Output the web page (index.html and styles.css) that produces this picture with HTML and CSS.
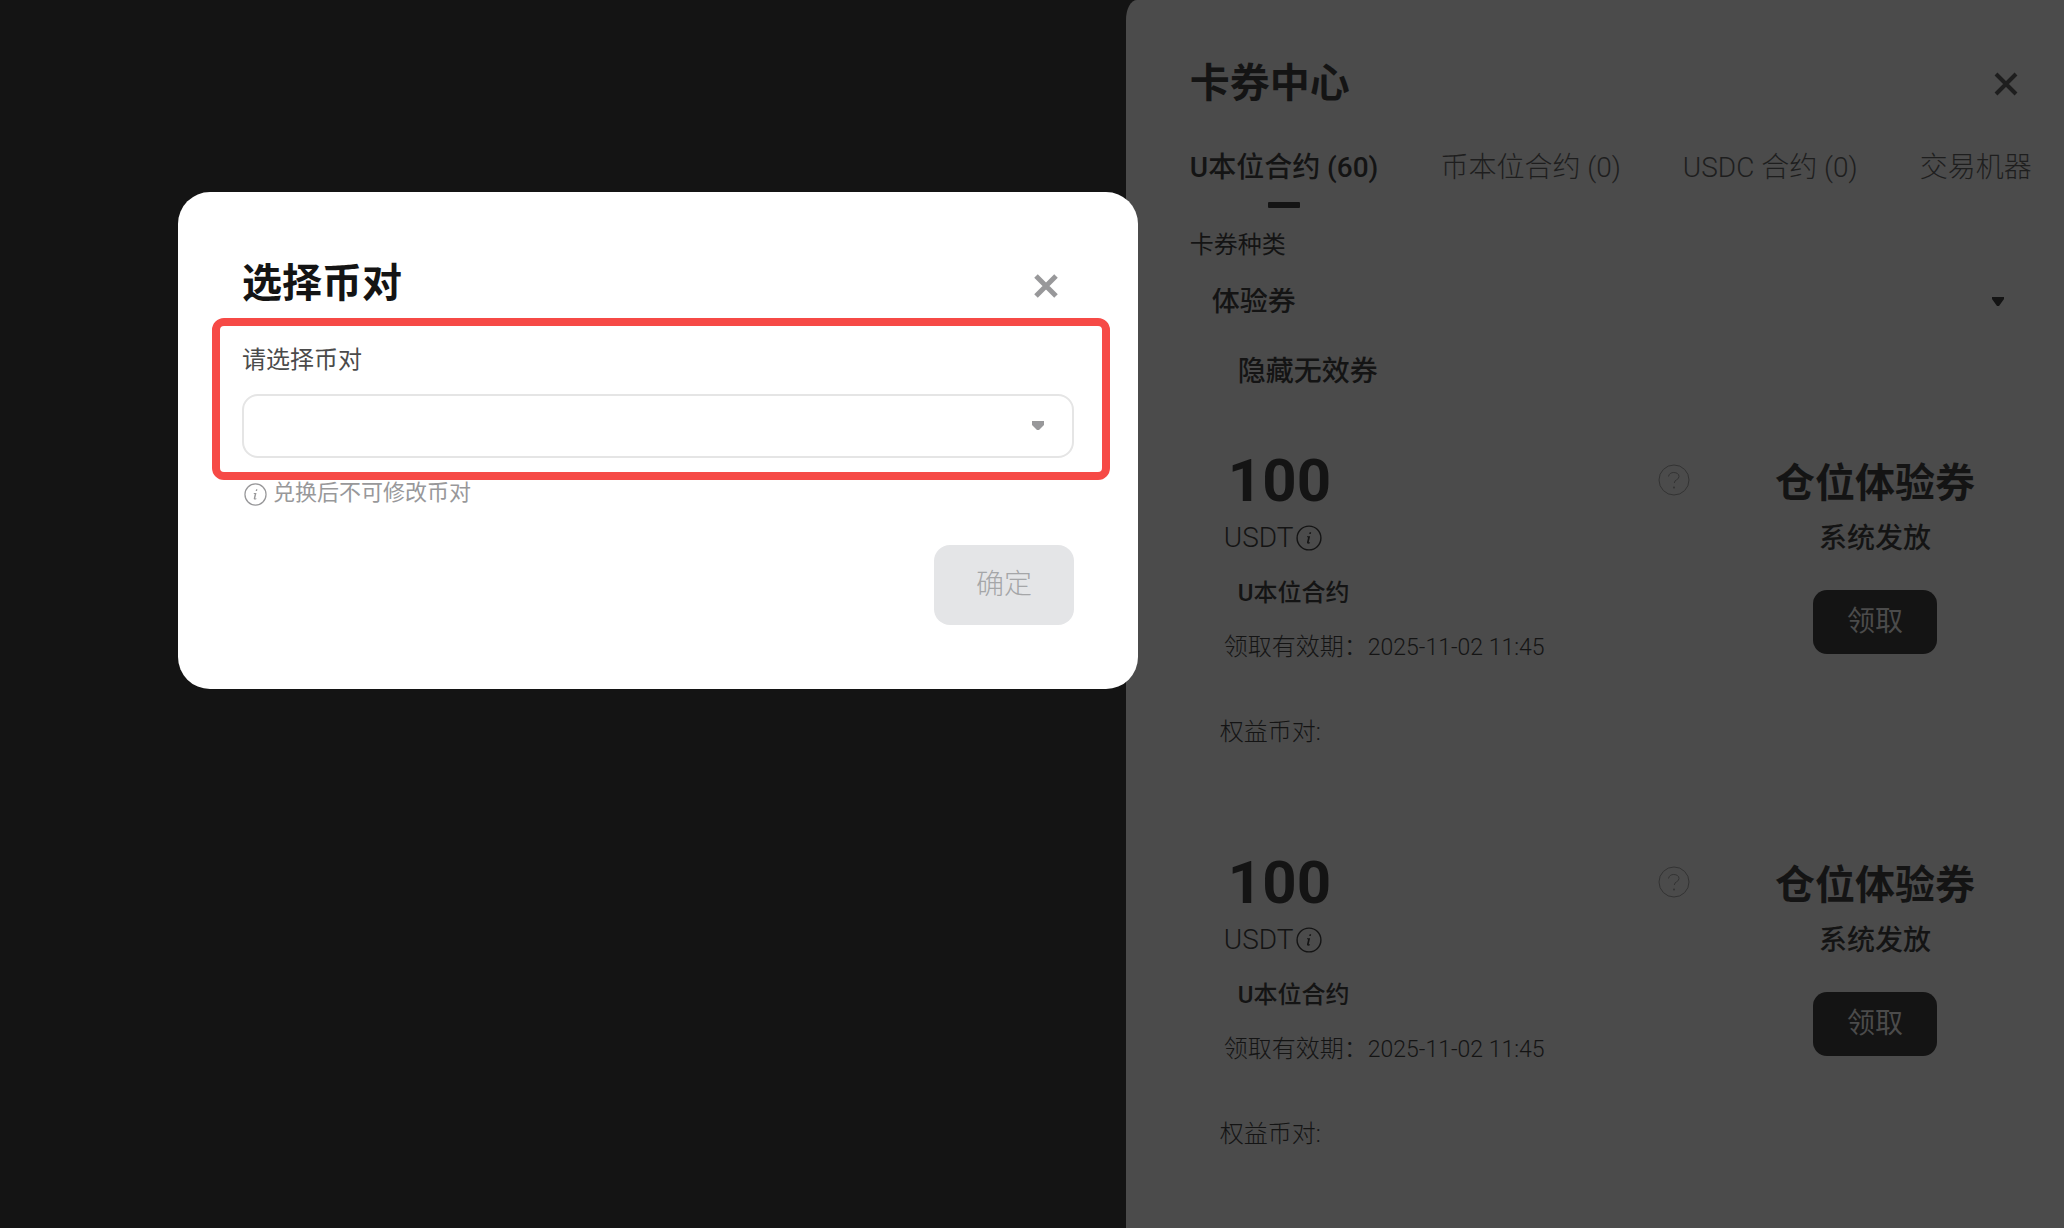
FILE: index.html
```html
<!DOCTYPE html>
<html lang="zh-CN">
<head>
<meta charset="UTF-8" />
<meta name="viewport" content="width=device-width, initial-scale=1" />
<title>卡券中心</title>
<link rel="stylesheet" href="styles.css">
</head>
<body>
  <!-- 图标 -->
  <svg class="sprite" aria-hidden="true">
    <symbol id="icon-info" viewBox="0 0 24 24">
      <circle cx="12" cy="12" r="11" fill="none" stroke="currentColor" stroke-width="1.3"/>
      <path d="M12.6 6.6h1.4l-.4 1.7h-1.4zM10.3 10.4h2.7l-1.2 5.2c-.1.5.2.7 1.2.4l-.2.9c-1.8.7-2.9.2-2.6-1.1l1-4.4h-1.1z" fill="currentColor"/>
    </symbol>
    <symbol id="icon-help" viewBox="0 0 32 32">
      <circle cx="16" cy="16" r="15" fill="none" stroke="currentColor"/>
      <path d="M10.500 12.500c.5-2.600 2.500-4 5.300-4 3 0 5.200 1.500 5.200 4 0 3.400-4.700 3-4.700 6.500" fill="none" stroke="currentColor"/>
      <circle cx="16" cy="23.500" r="1" fill="currentColor"/>
    </symbol>
    <symbol id="icon-close" viewBox="0 0 24 24">
      <path d="M2 2l20 20M22 2L2 22" fill="none" stroke="currentColor"/>
    </symbol>
    <symbol id="icon-arrow" viewBox="0 0 12 9">
      <path d="M0 0h12v4L7 9H5L0 4z" fill="currentColor"/>
    </symbol>
    <symbol id="icon-arrow-small" viewBox="0 0 12 9">
      <path d="M0 0h12v2L7 9H5L0 2z" fill="currentColor"/>
    </symbol>
  </svg>

  <div class="page">
    <aside class="drawer">
      <header class="drawer-header">
        <h1>卡券中心</h1>
        <button class="close" aria-label="关闭"><svg><use href="#icon-close"/></svg></button>
      </header>

      <nav class="tabs">
        <button class="tab active">U本位合约 (60)</button>
        <button class="tab">币本位合约 (0)</button>
        <button class="tab">USDC 合约 (0)</button>
        <button class="tab">交易机器</button>
      </nav>

      <label class="filter-label" for="couponType">卡券种类</label>
      <div class="select filter-select">
        <select id="couponType">
          <option>体验券</option>
        </select>
        <svg class="arrow"><use href="#icon-arrow-small"/></svg>
      </div>

      <label class="hide-invalid"><input type="checkbox">隐藏无效券</label>

      <section class="coupon">
        <div class="coupon-info">
          <strong class="amount">100</strong>
          <div class="unit">USDT<svg><use href="#icon-info"/></svg></div>
          <div class="market">U本位合约</div>
          <div class="expire">领取有效期：<time>2025-11-02 11:45</time></div>
          <div class="pair">权益币对:</div>
        </div>
        <svg class="help"><use href="#icon-help"/></svg>
        <div class="coupon-side">
          <h2>仓位体验券</h2>
          <p>系统发放</p>
          <button class="claim">领取</button>
        </div>
      </section>

      <section class="coupon">
        <div class="coupon-info">
          <strong class="amount">100</strong>
          <div class="unit">USDT<svg><use href="#icon-info"/></svg></div>
          <div class="market">U本位合约</div>
          <div class="expire">领取有效期：<time>2025-11-02 11:45</time></div>
          <div class="pair">权益币对:</div>
        </div>
        <svg class="help"><use href="#icon-help"/></svg>
        <div class="coupon-side">
          <h2>仓位体验券</h2>
          <p>系统发放</p>
          <button class="claim">领取</button>
        </div>
      </section>
    </aside>
  </div>

  <!-- 选择币对弹窗 -->
  <div class="overlay">
    <div class="modal" role="dialog" aria-labelledby="modalTitle">
      <header class="modal-header">
        <h2 id="modalTitle">选择币对</h2>
        <button class="close" aria-label="关闭"><svg><use href="#icon-close"/></svg></button>
      </header>

      <div class="highlight">
        <label for="pairSelect">请选择币对</label>
        <div class="select pair-select">
          <select id="pairSelect">
            <option></option>
          </select>
          <svg class="arrow"><use href="#icon-arrow"/></svg>
        </div>
      </div>

      <p class="hint"><svg><use href="#icon-info"/></svg>兑换后不可修改币对</p>

      <footer class="modal-footer">
        <button class="confirm" disabled>确定</button>
      </footer>
    </div>
  </div>
</body>
</html>
```

FILE: styles.css
```css
* {
  box-sizing: border-box;
}
body {
  margin: 0;
  background: #141414;
  color: #141414;
  font-family: Roboto, "Noto Sans CJK SC", sans-serif;
  font-size: 24px;
  line-height: 28px;
}
h1, h2, p {
  margin: 0;
}
h1, h2 {
  font-size: 40px;
  line-height: 56px;
  font-weight: 700;
}
button, select {
  font: inherit;
  color: inherit;
  border: none;
  background: none;
  padding: 0;
}
button {
  cursor: pointer;
}
.sprite {
  display: none;
}

.page {
  display: grid;
  grid-template-columns: 6fr 5fr;
  min-height: 100vh;
}

/* 右侧抽屉 */
.drawer {
  grid-column: 2;
  min-width: 0;
  overflow: hidden;
  padding: 56px 30px 0 64px;
  background: #4b4b4b;
  border-top-left-radius: 11px 20px;
}
.drawer-header, .modal-header {
  display: flex;
  justify-content: space-between;
  align-items: flex-start;
}
.close {
  display: flex;
  align-items: center;
  justify-content: center;
  width: 56px;
  height: 56px;
}
.close svg {
  width: 24px;
  height: 24px;
  stroke-width: 4;
}
.drawer .close {
  color: #1e1e1e;
}

.tabs {
  display: flex;
  gap: 62px;
  margin-top: 35px;
}
.tab {
  display: flex;
  flex-direction: column;
  align-items: center;
  gap: 13px;
  font-size: 28px;
  line-height: 42px;
  font-weight: 300;
  white-space: nowrap;
  color: #1e1e1e;
}
.tab.active {
  font-weight: 500;
  color: #141414;
}
.tab::after {
  content: "";
  width: 32px;
  height: 6px;
  border-radius: 1px;
}
.tab.active::after {
  background: #141414;
}

.filter-label {
  display: block;
  margin-top: 23px;
}
.select {
  position: relative;
}
.select select {
  display: block;
  width: 100%;
  height: 100%;
  appearance: none;
}
.arrow {
  position: absolute;
  top: 50%;
  right: 30px;
  width: 12px;
  height: 9px;
  margin-top: -5px;
  pointer-events: none;
}
.filter-select {
  height: 60px;
  margin-top: 13px;
  font-size: 28px;
  font-weight: 500;
}
.filter-select select {
  padding-left: 22px;
}
.hide-invalid {
  display: flex;
  align-items: center;
  gap: 24px;
  margin-top: 20px;
  font-size: 28px;
  line-height: 40px;
  font-weight: 500;
}
.hide-invalid input {
  appearance: none;
  width: 24px;
  height: 24px;
  margin: 0;
}

/* 卡券 */
.coupon {
  display: grid;
  grid-template-columns: 1fr 32px 318px;
  column-gap: 26px;
  margin-top: 56px;
}
.coupon + .coupon {
  margin-top: 104px;
}
.coupon-info {
  padding-left: 34px;
}
.amount {
  display: block;
  padding-left: 4px;
  font-size: 60px;
  line-height: 66px;
}
.unit {
  display: flex;
  align-items: center;
  gap: 2px;
  margin-top: 6px;
  font-size: 28px;
  line-height: 36px;
  font-weight: 300;
}
.unit svg {
  width: 26px;
  height: 26px;
}
.market {
  margin-top: 23px;
  padding-left: 14px;
  font-weight: 500;
}
.expire, .pair {
  font-weight: 300;
}
.expire {
  margin-top: 26px;
}
.expire time {
  font-size: 23px;
}
.pair {
  margin-top: 56px;
  margin-left: -4px;
}
.help {
  width: 32px;
  height: 32px;
  margin-top: 16px;
  color: #333;
}
.coupon-side {
  display: flex;
  flex-direction: column;
  align-items: center;
  padding-top: 8px;
}
.coupon-side p {
  margin-top: 7px;
  font-size: 28px;
  line-height: 40px;
  font-weight: 500;
}
.claim {
  margin-top: 31px;
  padding: 0 34px;
  font-size: 28px;
  line-height: 64px;
  border-radius: 14px;
  background: #141414;
  color: #4b4b4b;
}

/* 弹窗 */
.overlay {
  position: fixed;
  inset: 0;
  display: flex;
  align-items: flex-start;
  padding: 192px 178px;
}
.modal {
  width: 960px;
  padding: 64px;
  background: #fff;
  border-radius: 32px;
}
.modal .close {
  height: 60px;
  color: #98989a;
}
.modal .close svg {
  stroke-width: 5;
}
.highlight {
  margin: 2px -36px 0 -30px;
  padding: 20px 28px 14px 22px;
  border: 8px solid #f64a46;
  border-radius: 12px;
}
.highlight label {
  display: block;
  color: #4b4b4b;
}
.pair-select {
  height: 64px;
  margin-top: 20px;
  border: 2px solid #e5e5e5;
  border-radius: 16px;
  color: #98989a;
}
.pair-select .arrow {
  right: 28px;
}
.hint {
  display: flex;
  align-items: flex-start;
  gap: 6px;
  padding-left: 2px;
  font-size: 22px;
  line-height: 25px;
  color: #98989a;
}
.hint svg {
  width: 23px;
  height: 23px;
  margin-top: 3px;
}
.modal-footer {
  display: flex;
  justify-content: flex-end;
  margin-top: 39px;
}
.confirm {
  padding: 0 42px;
  font-size: 28px;
  line-height: 80px;
  font-weight: 300;
  border-radius: 16px;
  background: #e4e5e7;
  color: #a5a6a8;
}
```
